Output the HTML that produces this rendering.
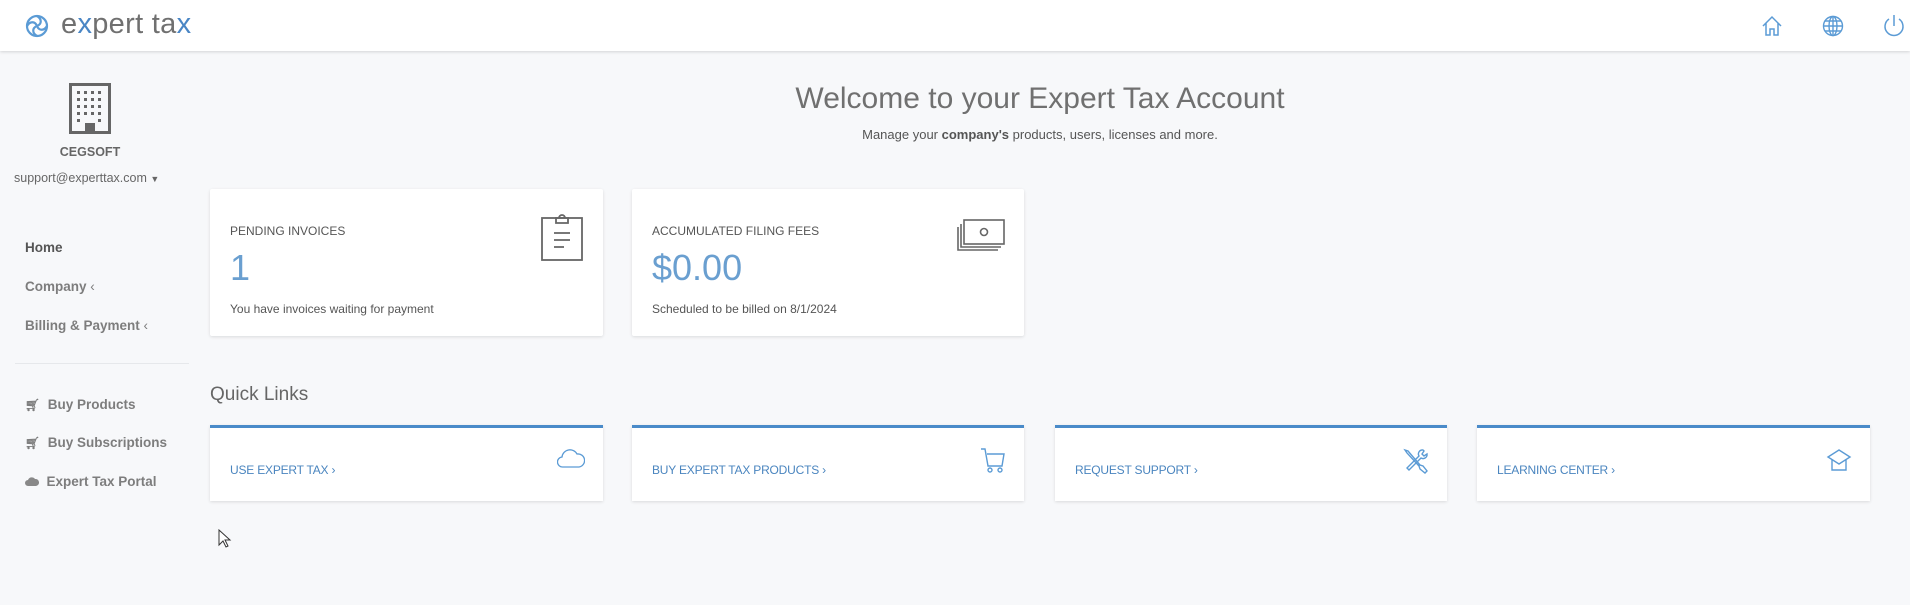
<!DOCTYPE html>
<html><head><meta charset="utf-8"><style>
*{box-sizing:border-box;margin:0;padding:0}
body{width:1910px;height:605px;background:#f7f8fa;font-family:"Liberation Sans",sans-serif;color:#555;position:relative;overflow:hidden}
.hdr{position:absolute;left:0;top:0;width:1910px;height:51px;background:#fff;box-shadow:0 1px 3px rgba(0,0,0,.15)}
.abs{position:absolute}
.nav{position:absolute;left:25px;font-size:13.5px;font-weight:bold;color:#7d7d7d}
.card{position:absolute;background:#fff;box-shadow:0 1px 3px rgba(0,0,0,.12);border-radius:2px}
.lbl{position:absolute;left:20px;font-size:12px;color:#555}
.big{position:absolute;left:20px;font-size:36px;color:#6a9fd0;font-weight:300}
.ql{position:absolute;top:425px;height:76px;width:393px;background:#fff;border-top:3px solid #4a8bc9;box-shadow:0 1px 3px rgba(0,0,0,.12)}
.ql span{position:absolute;left:20px;top:35px;font-size:12px;color:#4a85bf;letter-spacing:-.2px}
.ql svg{position:absolute;right:18px;top:20px}
</style></head><body>
<div class="hdr">
 <svg class="abs" style="left:24px;top:13px" width="26" height="26" viewBox="0 0 26 26"><g fill="none" stroke="#5b9bd5" stroke-width="2.2"><circle cx="13" cy="13" r="10"/><path d="M13 3c5 3 5 8 0 10M23 13c-3 5-8 5-10 0M13 23c-5-3-5-8 0-10M3 13c3-5 8-5 10 0"/></g></svg>
 <div class="abs" style="left:61px;top:8px;font-size:29px;color:#707070;letter-spacing:.3px">e<span style="color:#4a86c5">x</span>pert ta<span style="color:#4a86c5">x</span></div>
 <svg class="abs" style="left:1761px;top:15px" width="22" height="22" viewBox="0 0 22 22" fill="none" stroke="#5b9bd5" stroke-width="1.5"><path d="M2 11L11 2l9 9M5 8v12h4v-6h4v6h4V8"/></svg>
 <svg class="abs" style="left:1822px;top:15px" width="22" height="22" viewBox="0 0 22 22" fill="none" stroke="#5b9bd5" stroke-width="1.4"><circle cx="11" cy="11" r="9.5"/><ellipse cx="11" cy="11" rx="4" ry="9.5"/><path d="M1.5 11h19M3 6h16M3 16h16M11 1.5v19"/></svg>
 <svg class="abs" style="left:1882px;top:13px" width="24" height="26" viewBox="0 0 24 26" fill="none" stroke="#5b9bd5" stroke-width="1.5"><path d="M7 6a9 9 0 1 0 10 0M12 2v11"/></svg>
</div>
<svg class="abs" style="left:69px;top:83px" width="42" height="51" viewBox="0 0 42 51"><rect x="1.5" y="1.5" width="39" height="48" fill="none" stroke="#666" stroke-width="3"/><g fill="#666"><rect x="8" y="8" width="3" height="3"/><rect x="15" y="8" width="3" height="3"/><rect x="22" y="8" width="3" height="3"/><rect x="29" y="8" width="3" height="3"/><rect x="8" y="15" width="3" height="3"/><rect x="15" y="15" width="3" height="3"/><rect x="22" y="15" width="3" height="3"/><rect x="29" y="15" width="3" height="3"/><rect x="8" y="22" width="3" height="3"/><rect x="15" y="22" width="3" height="3"/><rect x="22" y="22" width="3" height="3"/><rect x="29" y="22" width="3" height="3"/><rect x="8" y="29" width="3" height="3"/><rect x="15" y="29" width="3" height="3"/><rect x="22" y="29" width="3" height="3"/><rect x="29" y="29" width="3" height="3"/><rect x="8" y="36" width="3" height="3"/><rect x="29" y="36" width="3" height="3"/><rect x="16" y="40" width="10" height="10"/></g></svg>
<div class="abs" style="left:0;width:180px;text-align:center;top:145px;font-size:12.5px;font-weight:bold;color:#666">CEGSOFT</div>
<div class="abs" style="left:14px;top:171px;font-size:12.5px;color:#666">support@experttax.com <span style="font-size:9px">▼</span></div>
<div class="nav" style="top:240px;color:#555">Home</div>
<div class="nav" style="top:279px">Company <span style="font-weight:normal">‹</span></div>
<div class="nav" style="top:318px">Billing &amp; Payment <span style="font-weight:normal">‹</span></div>
<div class="abs" style="left:15px;top:363px;width:174px;border-top:1px solid #e6e8eb"></div>
<div class="nav" style="top:397px"><span style="font-size:12px">🛒︎</span>&nbsp; Buy Products</div>
<div class="nav" style="top:435px"><span style="font-size:12px">🛒︎</span>&nbsp; Buy Subscriptions</div>
<div class="nav" style="top:474px"><svg width="14" height="10" viewBox="0 0 14 10" style="vertical-align:0"><path d="M3 10a3 3 0 0 1 0-6 4 4 0 0 1 7-1 3.5 3.5 0 0 1 1 7z" fill="#888"/></svg>&nbsp; Expert Tax Portal</div>
<div class="abs" style="left:210px;width:1660px;text-align:center;top:82px;font-size:30px;color:#707070;font-weight:300">Welcome to your Expert Tax Account</div>
<div class="abs" style="left:210px;width:1660px;text-align:center;top:127px;font-size:13px;color:#555">Manage your <b>company's</b> products, users, licenses and more.</div>
<div class="card" style="left:210px;top:189px;width:393px;height:147px">
 <div class="lbl" style="top:35px">PENDING INVOICES</div>
 <div class="big" style="top:58px">1</div>
 <div class="lbl" style="top:113px">You have invoices waiting for payment</div>
 <svg class="abs" style="left:330px;top:22px" width="44" height="50" viewBox="0 0 44 50" fill="none" stroke="#666" stroke-width="1.8"><rect x="2" y="7" width="40" height="42"/><path d="M16 7h12v5H16zM19 7a3 3 0 0 1 6 0M14 22h16M14 29h16M14 36h10"/></svg>
</div>
<div class="card" style="left:632px;top:189px;width:392px;height:147px">
 <div class="lbl" style="top:35px">ACCUMULATED FILING FEES</div>
 <div class="big" style="top:58px">$0.00</div>
 <div class="lbl" style="top:113px">Scheduled to be billed on 8/1/2024</div>
 <svg class="abs" style="left:324px;top:30px" width="50" height="34" viewBox="0 0 50 34" fill="none" stroke="#666" stroke-width="1.6"><rect x="8" y="1" width="40" height="24"/><path d="M5 5v23h40M2 8v23h40"/><circle cx="28" cy="13" r="3.5"/></svg>
</div>
<div class="abs" style="left:210px;top:384px;font-size:19px;color:#666;font-weight:300">Quick Links</div>
<div class="ql" style="left:210px"><span>USE EXPERT TAX ›</span><svg width="28" height="20" viewBox="0 0 28 20" fill="none" stroke="#5b9bd5" stroke-width="1.3"><path d="M6 19a5 5 0 0 1-1-10 8 8 0 0 1 15-3 6 6 0 0 1 2 13z"/></svg></div>
<div class="ql" style="left:632px;width:392px"><span>BUY EXPERT TAX PRODUCTS ›</span><svg width="26" height="26" viewBox="0 0 26 26" fill="none" stroke="#5b9bd5" stroke-width="1.4"><path d="M1 1h4l3 17h14l2-12H7"/><circle cx="10" cy="22" r="2"/><circle cx="20" cy="22" r="2"/></svg></div>
<div class="ql" style="left:1055px;width:392px"><span>REQUEST SUPPORT ›</span><svg width="26" height="26" viewBox="0 0 26 26" fill="none" stroke="#5b9bd5" stroke-width="1.4"><path d="M2 2l3 1 12 14 3 1 4 5-2 2-5-4-1-3L4 5zM20 2a4 4 0 0 0-4 6L4 20l2 2 12-12a4 4 0 0 0 6-4l-3 2-2-2 2-3z"/></svg></div>
<div class="ql" style="left:1477px;width:393px"><span>LEARNING CENTER ›</span><svg width="26" height="26" viewBox="0 0 26 26" fill="none" stroke="#5b9bd5" stroke-width="1.4"><path d="M13 2L2 9l11 7 11-7zM6 12v10h14V12"/></svg></div>
<svg class="abs" style="left:218px;top:529px" width="14" height="20" viewBox="0 0 14 20"><path d="M1 1v15l4-4 3 6 2-1-3-6h5z" fill="#fff" stroke="#333" stroke-width="1"/></svg>
</body></html>
